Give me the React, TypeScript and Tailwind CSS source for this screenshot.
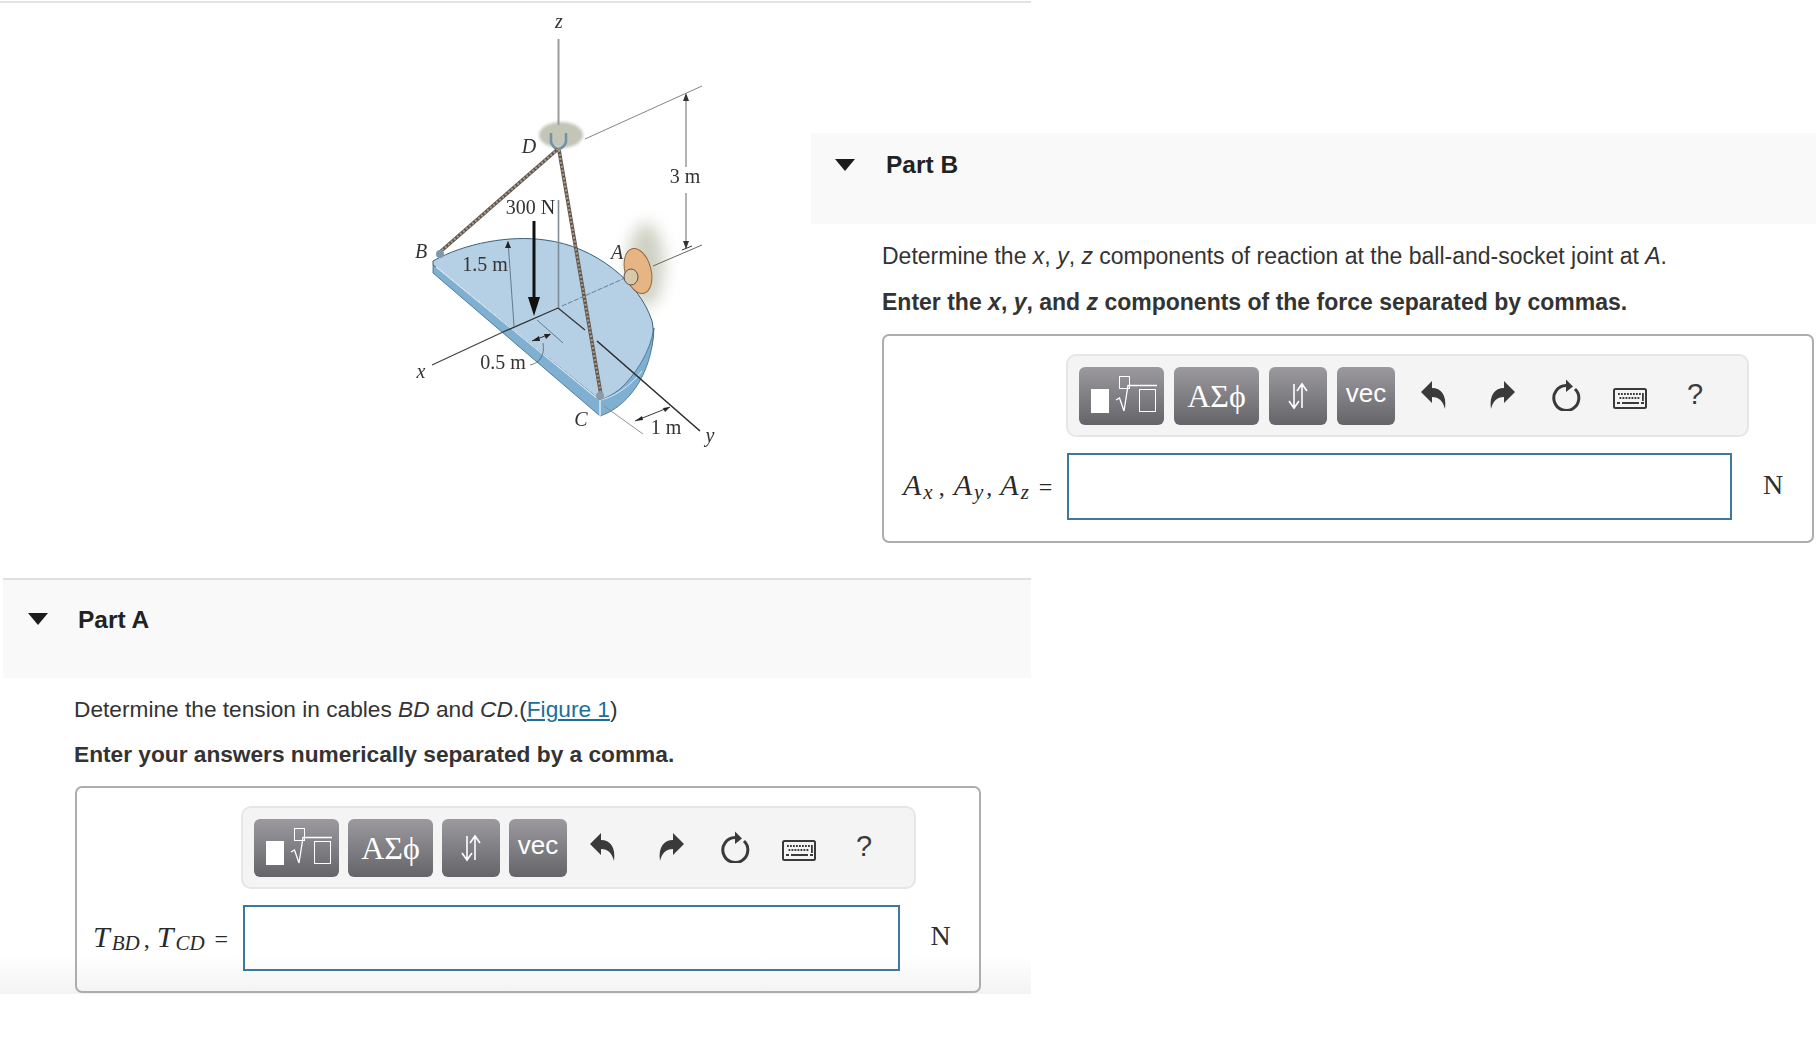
import React from "react";

const btn = "flex items-center justify-center h-[58px] rounded-[6px] bg-gradient-to-b from-[#9c9a9f] to-[#656569] text-white shrink-0";

function Undo({ flip }: { flip?: boolean }) {
  return (
    <svg width="26" height="30" viewBox="0 0 26 30" className={flip ? "-scale-x-100" : ""}>
      <path d="M0 11 L11 0 L11 7 C20 7 26 14 24 28 C22 20 18 16 11 16 L11 22 Z" fill="#3a3a3a" />
    </svg>
  );
}

function Refresh() {
  return (
    <svg width="32" height="34" viewBox="0 0 32 34" fill="none" className="-mt-[3px]">
      <path d="M16 8.5 A12.5 12.5 0 1 0 25 12" stroke="#3a3a3a" strokeWidth="3" />
      <path d="M16 2.5 L23 9.5 L16 15 Z" fill="#3a3a3a" />
    </svg>
  );
}

function Keyboard() {
  const dots = [];
  for (let i = 0; i < 8; i++) dots.push(<rect key={"a" + i} x={5 + i * 3} y="5" width="1.8" height="2" fill="#3a3a3a" />);
  for (let i = 0; i < 7; i++) dots.push(<rect key={"b" + i} x={6.5 + i * 3} y="9" width="1.8" height="2" fill="#3a3a3a" />);
  return (
    <svg width="34" height="21" viewBox="0 0 34 21" fill="none">
      <rect x="1" y="1" width="32" height="19" rx="1.5" stroke="#3a3a3a" strokeWidth="2" />
      {dots}
      <rect x="29" y="5" width="1.8" height="8" fill="#3a3a3a" />
      <rect x="9" y="14" width="17" height="2" fill="#3a3a3a" />
      <rect x="4" y="14" width="3" height="2" fill="#3a3a3a" />
      <rect x="28" y="14" width="3" height="2" fill="#3a3a3a" />
    </svg>
  );
}

function Templates() {
  return (
    <svg width="85" height="58" viewBox="0 0 85 58" fill="none">
      <rect x="12" y="22" width="18" height="24" fill="#fff" />
      <rect x="40.5" y="9.5" width="10" height="12" stroke="#fff" strokeWidth="1" />
      <path d="M37 33 L40.5 31 L45 44 L49 18.5 L78 18.5" stroke="#fff" strokeWidth="1.3" />
      <rect x="60.5" y="22.5" width="16" height="22" stroke="#fff" strokeWidth="1" />
    </svg>
  );
}

function Arrows() {
  return (
    <svg width="26" height="30" viewBox="0 0 26 30" fill="none" stroke="#fff" strokeWidth="1.6">
      <path d="M9 3 L9 27 M4 20 L9 27 L14 20" />
      <path d="M17 27 L17 3 M12 10 L17 3 L22 10" />
    </svg>
  );
}

function TextButtons() {
  return (
    <>
      <div className={`${btn} w-[85px]`}><Templates /></div>
      <div className={`${btn} w-[85px] font-['Liberation_Serif',serif] text-[32px]`}>ΑΣϕ</div>
      <div className={`${btn} w-[58px]`}><Arrows /></div>
      <div className={`${btn} w-[58px] pb-[4px] text-[26px]`}>vec</div>
    </>
  );
}

function IconSet() {
  return (
    <>
      <div className="w-[68px] flex justify-center"><Undo /></div>
      <div className="w-[68px] flex justify-center"><Undo flip /></div>
      <div className="w-[60px] flex justify-center"><Refresh /></div>
      <div className="w-[68px] flex justify-center pt-[6px]"><Keyboard /></div>
      <div className="w-[62px] flex justify-center text-[29px] text-[#3a3a3a] pb-[2px]">?</div>
    </>
  );
}

function Caret() {
  return (
    <svg width="20" height="12" viewBox="0 0 20 12" className="shrink-0">
      <path d="M0 0 H20 L10 12 Z" fill="#1c1c1c" />
    </svg>
  );
}

function Rope({ x1, y1, x2, y2 }: { x1: number; y1: number; x2: number; y2: number }) {
  return (
    <>
      <line x1={x1} y1={y1} x2={x2} y2={y2} stroke="#5f554d" strokeWidth="3.6" />
      <line x1={x1} y1={y1} x2={x2} y2={y2} stroke="#a99d90" strokeWidth="2.2" strokeDasharray="2 2" />
    </>
  );
}

function Figure() {
  const serif = "'Liberation Serif', serif";
  return (
    <svg width="380" height="480" viewBox="0 0 380 480" className="ml-[380px] shrink-0 blur-[0.5px]" fill="none">
      <defs>
        <filter id="soft" x="-100%" y="-100%" width="300%" height="300%"><feGaussianBlur stdDeviation="8" /></filter>
        <filter id="soft2" x="-50%" y="-50%" width="200%" height="200%"><feGaussianBlur stdDeviation="1.5" /></filter>
      </defs>
      <ellipse cx="266" cy="262" rx="18" ry="42" fill="#ced0c2" filter="url(#soft)" />
      <ellipse cx="181" cy="132" rx="22" ry="13" fill="#c3c5b7" filter="url(#soft2)" />
      <line x1="178.5" y1="36" x2="178.5" y2="122" stroke="#9b9b9b" strokeWidth="2" />
      <line x1="205" y1="136" x2="322" y2="83" stroke="#777" strokeWidth="0.9" />
      <line x1="273" y1="263" x2="322" y2="242" stroke="#666" strokeWidth="1" />
      <line x1="306" y1="92" x2="306" y2="164" stroke="#555" strokeWidth="0.9" />
      <line x1="306" y1="190" x2="306" y2="245" stroke="#555" strokeWidth="0.9" />
      <path d="M303 98 L306 90 L309 98 Z" fill="#333" />
      <path d="M303 238 L306 246 L309 238 Z" fill="#333" />
      <line x1="302" y1="247" x2="312" y2="243" stroke="#333" strokeWidth="1" />
      <path d="M171 130 L171 139 Q173 145 178 146 M186 130 L186 139 Q184 145 178 146" stroke="#6f93a8" strokeWidth="2.5" />
      <path d="M53 258 C85 240 130 232 165 237 C215 243 260 280 272 318 C278 345 262 372 240 388 C232 394 226 396 220 397 L53 262 Z" fill="#b5d0e4" stroke="#39607c" strokeWidth="1" />
      <path d="M53 262 L53 270 L220 413 C245 405 272 375 274 325 C270 350 255 372 240 386 C232 392 226 395 220 397 Z" fill="#7fb0d2" stroke="#3f6a88" strokeWidth="0.8" />
      <path d="M56 264 L218 396" stroke="#dceaf3" strokeWidth="1.2" />
      <path d="M220 397 L220 413" stroke="#dceaf3" strokeWidth="1.5" />
      <path d="M220 397 C232 395 250 384 262 368" stroke="#dceaf3" strokeWidth="1" />
      <ellipse cx="258" cy="268" rx="13" ry="23" transform="rotate(-15 258 268)" fill="#e7b583" stroke="#8d6a45" strokeWidth="1" />
      <ellipse cx="251" cy="274" rx="7" ry="8" fill="#d9c9a8" stroke="#555" strokeWidth="1" />
      <line x1="178.5" y1="197" x2="178.5" y2="306" stroke="#7f8c95" strokeWidth="1.6" />
      <line x1="182" y1="303" x2="245" y2="275" stroke="#4d6b80" strokeWidth="0.8" strokeDasharray="5 1.5" />
      <line x1="178" y1="305" x2="123" y2="329" stroke="#333" strokeWidth="1.3" />
      <line x1="123" y1="329" x2="52" y2="362" stroke="#444" strokeWidth="1.3" />
      <line x1="178" y1="305" x2="205" y2="327" stroke="#333" strokeWidth="1.2" />
      <line x1="217" y1="338" x2="320" y2="428" stroke="#2c2c2c" strokeWidth="1.6" />
      <line x1="128" y1="238" x2="134" y2="323" stroke="#456" strokeWidth="0.7" />
      <path d="M125 245 L128 238 L131 245 Z" fill="#222" />
      <line x1="157" y1="317" x2="183" y2="340" stroke="#456" strokeWidth="0.7" />
      <line x1="152" y1="338" x2="170" y2="331" stroke="#222" strokeWidth="0.9" />
      <path d="M152 338 L159 333 L160 338 Z M171 331 L164 331 L166 336 Z" fill="#222" />
      <path d="M163 340 C165 352 160 360 150 362" stroke="#456" strokeWidth="0.7" />
      <line x1="224" y1="403" x2="263" y2="431" stroke="#888" strokeWidth="0.9" />
      <line x1="255" y1="418" x2="290" y2="404" stroke="#222" strokeWidth="0.9" />
      <path d="M255 418 L262 413 L263 417 Z M290 404 L283 405 L285 409 Z" fill="#222" />
      <Rope x1={178} y1={146} x2={60} y2={249} />
      <Rope x1={179} y1={147} x2={221} y2={392} />
      <circle cx="220" cy="393" r="4" fill="#8b9aa6" />
      <circle cx="60" cy="251" r="4" fill="#7d99ae" />
      <line x1="154" y1="218" x2="154" y2="298" stroke="#111" strokeWidth="3" />
      <path d="M148 294 L160 294 L154 313 Z" fill="#111" />
      <g fill="#333" fontFamily={serif} fontSize="20">
        <text x="179" y="25" textAnchor="middle" fontStyle="italic">z</text>
        <text x="149" y="150" textAnchor="middle" fontStyle="italic">D</text>
        <text x="150.5" y="211" textAnchor="middle">300 N</text>
        <text x="41" y="255" textAnchor="middle" fontStyle="italic">B</text>
        <text x="105" y="268" textAnchor="middle">1.5 m</text>
        <text x="237" y="256" textAnchor="middle" fontStyle="italic">A</text>
        <text x="305" y="180" textAnchor="middle">3 m</text>
        <text x="41" y="375" textAnchor="middle" fontStyle="italic">x</text>
        <text x="123" y="366" textAnchor="middle">0.5 m</text>
        <text x="201" y="423" textAnchor="middle" fontStyle="italic">C</text>
        <text x="286" y="431" textAnchor="middle">1 m</text>
        <text x="330" y="439" textAnchor="middle" fontStyle="italic">y</text>
      </g>
    </svg>
  );
}

const mathM = "font-['Liberation_Serif',serif] italic text-[30px] text-[#2a2a2a] mr-[2px]";
const mathS = "font-['Liberation_Serif',serif] italic text-[21px] text-[#2a2a2a] translate-y-[3px]";
const punct = "font-['Liberation_Serif',serif] text-[24px] text-[#2a2a2a]";

export default function App() {
  return (
    <div className="flex w-[1816px] h-[1054px] overflow-hidden bg-white font-['Liberation_Sans',sans-serif] text-[#333]">
      <div className="w-[811px] shrink-0">
        <div className="w-[1031px]">
          <div className="h-[2px] mt-[1px] bg-[#e2e2e2]" />
          <div className="h-[575px]"><Figure /></div>
          <div className="ml-[3px] h-[100px] border-t-2 border-[#e0e0e0] bg-[#f9f9f9] flex items-start pl-[25px] pt-[26px] gap-[30px]">
            <div className="pt-[7px]"><Caret /></div>
            <div className="text-[24.5px] leading-[28px] font-bold text-[#222]">Part A</div>
          </div>
          <div className="h-[316px] pl-[74px] bg-[linear-gradient(to_bottom,#fff_88%,#f3f3f3_100%)]">
            <div className="pt-[17px] text-[22.7px] leading-[28px]">
              Determine the tension in cables <i>BD</i> and <i>CD</i>.(<span className="text-[#1b6f98] underline">Figure 1</span>)
            </div>
            <div className="mt-[17px] text-[22.7px] leading-[28px] font-bold">Enter your answers numerically separated by a comma.</div>
            <div className="mt-[18px] ml-[1px] w-[906px] h-[207px] border-2 border-[#adadad] rounded-[7px]">
              <div className="ml-[164px] mt-[18px] w-[675px] h-[83px] rounded-[10px] border-2 border-[#e6e6e6] bg-[#f4f4f4] flex items-center pl-[11px] gap-[9px]">
                <TextButtons />
                <div className="flex items-center -ml-[7px]"><IconSet /></div>
              </div>
              <div className="mt-[16px] flex items-center h-[66px]">
                <div className="w-[166px] pl-[16px] pb-[4px] flex items-baseline whitespace-nowrap">
                  <span className={mathM}>T</span><span className={mathS}>BD</span>
                  <span className={`${punct} ml-[4px] mr-[7px]`}>,</span>
                  <span className={mathM}>T</span><span className={mathS}>CD</span>
                  <span className={`${punct} ml-[10px]`}>=</span>
                </div>
                <div className="w-[657px] h-[66px] border-2 border-[#3b7a9e]" />
                <div className="flex-1 text-center pl-[2px] pb-[4px] font-['Liberation_Serif',serif] text-[28px] text-[#2e2e2e]">N</div>
              </div>
            </div>
          </div>
        </div>
      </div>
      <div className="flex-1 pt-[133px]">
        <div className="h-[91px] bg-[#f9f9f9] flex items-start pl-[24px] pt-[18px] gap-[31px]">
          <div className="pt-[8px]"><Caret /></div>
          <div className="text-[24.5px] leading-[28px] font-bold text-[#222]">Part B</div>
        </div>
        <div className="pl-[71px]">
          <div className="pt-[18px] text-[23px] leading-[28px]">
            Determine the <i>x</i>, <i>y</i>, <i>z</i> components of reaction at the ball-and-socket joint at <i>A</i>.
          </div>
          <div className="mt-[18px] text-[23px] leading-[28px] font-bold">
            Enter the <i>x</i>, <i>y</i>, and <i>z</i> components of the force separated by commas.
          </div>
          <div className="mt-[18px] w-[932px] h-[209px] border-2 border-[#adadad] rounded-[7px]">
            <div className="ml-[182px] mt-[18px] w-[683px] h-[83px] rounded-[10px] border-2 border-[#e6e6e6] bg-[#f4f4f4] flex items-center pl-[11px] gap-[10px]">
              <TextButtons />
              <div className="flex items-center -ml-[5px]"><IconSet /></div>
            </div>
            <div className="mt-[16px] flex items-center h-[67px]">
              <div className="w-[183px] pl-[19px] pb-[4px] flex items-baseline whitespace-nowrap">
                <span className={mathM}>A</span><span className={`${mathS} text-[20px] translate-y-[4px]`}>x</span>
                <span className={`${punct} ml-[6px] mr-[9px]`}>,</span>
                <span className={mathM}>A</span><span className={`${mathS} text-[20px] translate-y-[4px]`}>y</span>
                <span className={`${punct} ml-[3px] mr-[8px]`}>,</span>
                <span className={mathM}>A</span><span className={`${mathS} text-[20px] translate-y-[4px]`}>z</span>
                <span className={`${punct} ml-[10px]`}>=</span>
              </div>
              <div className="w-[665px] h-[67px] border-2 border-[#3b7a9e]" />
              <div className="flex-1 text-center pl-[2px] pb-[4px] font-['Liberation_Serif',serif] text-[28px] text-[#2e2e2e]">N</div>
            </div>
          </div>
        </div>
      </div>
    </div>
  );
}
